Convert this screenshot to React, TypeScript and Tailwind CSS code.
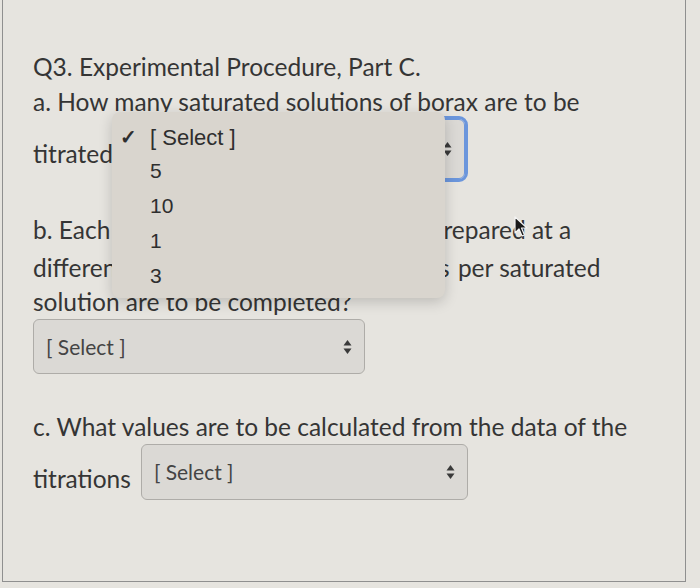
import React from "react"

function Arrows() {
  return (
    <svg width="9" height="16" viewBox="0 0 9 16" className="shrink-0">
      <path d="M4.5 1 L8.5 6.5 L0.5 6.5 Z" fill="#3a3a3a" />
      <path d="M4.5 15 L8.5 9.5 L0.5 9.5 Z" fill="#3a3a3a" />
    </svg>
  )
}

function SelectBox({ className, focused }: { className: string; focused?: boolean }) {
  return (
    <div
      className={
        "flex items-center justify-between rounded-md border bg-[#dbd9d5] pl-3 pr-3 text-[21px] text-[#444] " +
        (focused ? "border-[#6b96dc] outline-[3px] outline-solid outline-[#6b96dc] " : "border-[#aeaca8] ") +
        className
      }
    >
      <span>[ Select ]</span>
      <Arrows />
    </div>
  )
}

export default function App() {
  const options = ["5", "10", "1", "3"]

  return (
    <div className="relative h-[588px] w-[700px] overflow-hidden bg-[#e6e4df] font-['Lato',sans-serif] text-[#353535]">
      <div className="ml-[2px] mt-[-10px] h-[592px] w-[684px] border border-[#8f8f8f] bg-[#e6e4df] pl-[30px] text-[24.5px]">
        {/* title */}
        <h1 className="mt-[58px] leading-[36px]">Q3. Experimental Procedure, Part C.</h1>

        {/* part a */}
        <p className="leading-[34px]">a. How many saturated solutions of borax are to be</p>
        <div className="flex items-center gap-[6px]">
          <span className="mt-[10px]">titrated</span>
          <SelectBox focused className="h-[60px] w-[346px]" />
        </div>

        {/* part b */}
        <p className="mt-[32px] leading-[38px]">
          b. Each <span className="[word-spacing:-1px]">saturated solution of borax is p</span>repared at a
          <br />
          different temperature. How many trials <span className="ml-[2px]">per saturated</span>
        </p>
        <p className="leading-[30px]">solution are to be completed?</p>
        <SelectBox className="mt-[2px] h-[55px] w-[332px]" />

        {/* part c */}
        <p className="mt-[35px] leading-[36px]">c. What values are to be calculated from the data of the</p>
        <div className="mt-[-1px] flex items-center gap-[10px]">
          <span className="mt-[14px]">titrations</span>
          <SelectBox className="h-[56px] w-[327px]" />
        </div>
      </div>

      {/* open native dropdown */}
      <div className="absolute left-[112px] top-[112px] h-[186px] w-[333px] rounded-lg bg-[#d9d5ce] pt-[9px] font-['Liberation_Sans',sans-serif] text-[21px] text-[#2e2e2e] shadow-[0_4px_14px_rgba(0,0,0,0.18)]">
        <div className="flex h-[32px] items-center">
          <span className="w-[38px] pl-[8px] text-[20px] font-bold">✓</span>
          <span className="text-[22px]">[ Select ]</span>
        </div>
        {options.map((o) => (
          <div key={o} className="flex h-[35px] items-center pl-[38px]">
            {o}
          </div>
        ))}
      </div>

      {/* mouse pointer */}
      <svg className="absolute left-[514px] top-[216px]" width="14" height="22" viewBox="0 0 14 22">
        <path d="M1 1 L1 17 L5 13 L8 20 L10.5 19 L7.5 12 L13 12 Z" fill="#1a1a1a" stroke="#f4f4f4" strokeWidth="1.2" strokeLinejoin="round" />
      </svg>
    </div>
  )
}
